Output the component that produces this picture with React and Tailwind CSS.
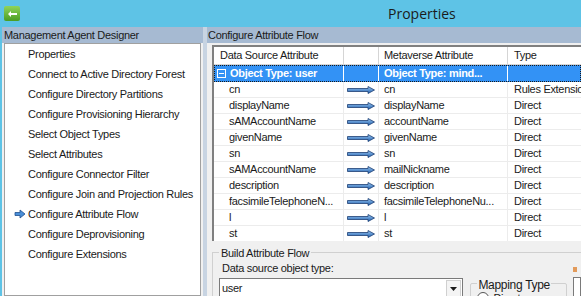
import React from "react";

const steps = [
  "Properties",
  "Connect to Active Directory Forest",
  "Configure Directory Partitions",
  "Configure Provisioning Hierarchy",
  "Select Object Types",
  "Select Attributes",
  "Configure Connector Filter",
  "Configure Join and Projection Rules",
  "Configure Attribute Flow",
  "Configure Deprovisioning",
  "Configure Extensions",
];

const rows = [
  ["cn", "cn", "Rules Extension"],
  ["displayName", "displayName", "Direct"],
  ["sAMAccountName", "accountName", "Direct"],
  ["givenName", "givenName", "Direct"],
  ["sn", "sn", "Direct"],
  ["sAMAccountName", "mailNickname", "Direct"],
  ["description", "description", "Direct"],
  ["facsimileTelephoneN...", "facsimileTelephoneNu...", "Direct"],
  ["l", "l", "Direct"],
  ["st", "st", "Direct"],
];

const FlowArrow = () => (
  <svg width="28" height="8" viewBox="0 0 28 8">
    <defs>
      <linearGradient id="ag" x1="0" y1="0" x2="0" y2="1">
        <stop offset="0" stopColor="#9cc8f0" />
        <stop offset="1" stopColor="#1f5fb0" />
      </linearGradient>
    </defs>
    <path d="M0.5 2.5 H21 V0.5 L27.5 4 L21 7.5 V5.5 H0.5 Z" fill="url(#ag)" stroke="#1d3f73" strokeWidth="0.8" />
  </svg>
);

const StepArrow = () => (
  <svg width="12" height="10" viewBox="0 0 12 10">
    <path d="M1 3.5 H6 V1 L11 5 L6 9 V6.5 H1 Z" fill="#4a8fd8" stroke="#1f4f8f" strokeWidth="0.8" />
  </svg>
);

export default function App() {
  return (
    <div className="w-[581px] h-[296px] overflow-hidden bg-[#5ec3e6] flex flex-col font-['Liberation_Sans',Arial,sans-serif] text-[11px] tracking-[-0.3px] text-[#1a1a1a]">
      {/* title bar */}
      <div className="h-[27px] flex items-center shrink-0">
        <div className="ml-[4px] w-[16px] h-[15px] rounded-[2px] bg-gradient-to-b from-[#8fd45a] to-[#4a9d22] flex items-center justify-center">
          <svg width="11" height="8" viewBox="0 0 11 8">
            <path d="M1 4 L4 1 V3 H10 V5 H4 V7 Z" fill="#fff" />
          </svg>
        </div>
        <div className="ml-[368px] text-[14px] tracking-normal text-[#1b1b1b] font-['Open_Sans',sans-serif]">Properties</div>
      </div>

      {/* body */}
      <div className="flex-1 flex ml-[2px] bg-[#f0f0f0] min-h-0">
        {/* left panel */}
        <div className="w-[201px] flex flex-col shrink-0">
          <div className="h-[16px] bg-[#a6bad2] pl-[2px] flex items-center">Management Agent Designer</div>
          <div className="flex-1 mx-[2px] bg-white border border-[#a0a0a0]">
            {steps.map((s) => (
              <div key={s} className="h-[20px] flex items-center whitespace-nowrap">
                <div className="w-[23px] flex justify-end pr-[2px]">
                  {s === "Configure Attribute Flow" && <StepArrow />}
                </div>
                <span>{s}</span>
              </div>
            ))}
          </div>
        </div>

        {/* splitter */}
        <div className="w-[4px] bg-[#c8d4e2] shrink-0" />

        {/* right panel */}
        <div className="flex-1 flex flex-col min-w-0 min-h-0 overflow-hidden">
          <div className="h-[16px] bg-[#a6bad2] pl-[1px] flex items-center shrink-0">Configure Attribute Flow</div>
          <div className="ml-[5px] mt-[2px] h-[196px] shrink-0 bg-white border-l-2 border-t-2 border-[#808080] overflow-hidden">
            {/* header */}
            <div className="h-[18px] flex border-b border-[#d5d5d5]">
              <div className="w-[130px] pl-[6px] flex items-center border-r border-[#d5d5d5]">Data Source Attribute</div>
              <div className="w-[35px] border-r border-[#d5d5d5]" />
              <div className="w-[129px] pl-[5px] flex items-center border-r border-[#d5d5d5]">Metaverse Attribute</div>
              <div className="flex-1 pl-[6px] flex items-center">Type</div>
            </div>
            {/* selected object row */}
            <div className="h-[17px] flex bg-[#3392f5] text-white font-bold border border-dotted border-[#1a1a1a]">
              <div className="w-[129px] flex items-center border-r border-white whitespace-nowrap">
                <span className="ml-[2px] w-[9px] h-[9px] border border-white flex items-center justify-center">
                  <span className="w-[5px] h-[1px] bg-white" />
                </span>
                <span className="ml-[4px]">Object Type: user</span>
              </div>
              <div className="w-[35px] border-r border-white" />
              <div className="w-[129px] pl-[5px] flex items-center border-r border-white whitespace-nowrap">Object Type: mind...</div>
              <div className="flex-1" />
            </div>
            {rows.map((r, i) => (
              <div key={i} className="h-[16px] flex border-b border-[#ececec]">
                <div className="w-[130px] pl-[15px] flex items-center border-r border-[#ececec] whitespace-nowrap overflow-hidden">{r[0]}</div>
                <div className="w-[35px] flex items-center justify-center border-r border-[#ececec]">
                  <FlowArrow />
                </div>
                <div className="w-[129px] pl-[5px] flex items-center border-r border-[#ececec] whitespace-nowrap overflow-hidden">{r[1]}</div>
                <div className="flex-1 pl-[6px] flex items-center whitespace-nowrap overflow-hidden">{r[2]}</div>
              </div>
            ))}
          </div>

          {/* build attribute flow group */}
          <div className="ml-[5px] mt-[11px] flex-1 shrink-0 border-l border-t border-[#d0d0d0] relative">
            <div className="absolute -top-[8px] left-[6px] bg-[#f0f0f0] px-[2px] text-[#1a1a1a] whitespace-nowrap">Build Attribute Flow</div>
            <div className="pl-[9px] pt-[7px] text-[#1a1a1a]">Data source object type:</div>
            <div className="flex items-start">
              <div className="ml-[6px] mt-[1px] w-[248px] h-[22px] bg-white border border-[#7a7a7a] flex items-center">
                <span className="pl-[2px] flex-1">user</span>
                <div className="w-[15px] h-[18px] mr-[1px] border border-[#d0d0d0] bg-[#f4f4f4] flex items-center justify-center">
                  <svg width="7" height="4" viewBox="0 0 7 4">
                    <path d="M0 0 H7 L3.5 4 Z" fill="#1a1a1a" />
                  </svg>
                </div>
              </div>
              <div className="ml-[7px] mt-[6px] w-[98px] h-[30px] border border-[#d0d0d0] rounded-[2px] relative">
                <div className="absolute -top-[8px] left-[6px] bg-[#f0f0f0] px-[1px] text-[12px] whitespace-nowrap">Mapping Type</div>
                <div className="absolute top-[6px] left-[6px] flex items-center gap-[4px]">
                  <span className="w-[12px] h-[12px] rounded-full border border-[#555] bg-white flex items-center justify-center">
                    <span className="w-[4px] h-[4px] rounded-full bg-[#1a1a1a]" />
                  </span>
                  <span>Direct</span>
                </div>
              </div>
              <div className="ml-[6px] mt-[-10px] flex flex-col">
                <div className="w-[4px] h-[5px] bg-[#e29a5a]" />
                <div className="mt-[5px] w-[8px] h-[20px] border border-[#7a7a7a] bg-white" />
              </div>
            </div>
          </div>
        </div>
      </div>
    </div>
  );
}
